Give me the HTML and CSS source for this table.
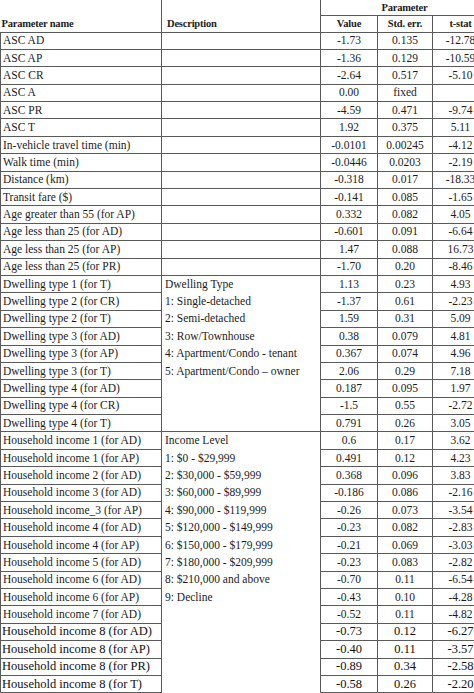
FILE: index.html
```html
<!DOCTYPE html>
<html>
<head>
<meta charset="utf-8">
<link rel="stylesheet" href="styles.css">
</head>
<body>
<table class="tbl">
<colgroup>
<col class="c-name"><col class="c-desc"><col class="c-val"><col class="c-std"><col class="c-t">
</colgroup>
<thead>
<tr class="h1">
<th class="name" rowspan="2">Parameter name</th>
<th class="desc" rowspan="2">Description</th>
<th class="param" colspan="3">Parameter</th>
</tr>
<tr class="h2">
<th class="num">Value</th><th class="num">Std. err.</th><th class="num">t-stat</th>
</tr>
</thead>
<tbody>
<tr><td class="name">ASC AD</td><td class="desc"></td><td class="num">-1.73</td><td class="num">0.135</td><td class="num">-12.78</td></tr>
<tr><td class="name">ASC AP</td><td class="desc"></td><td class="num">-1.36</td><td class="num">0.129</td><td class="num">-10.59</td></tr>
<tr><td class="name">ASC CR</td><td class="desc"></td><td class="num">-2.64</td><td class="num">0.517</td><td class="num">-5.10</td></tr>
<tr><td class="name">ASC A</td><td class="desc"></td><td class="num">0.00</td><td class="num">fixed</td><td class="num"></td></tr>
<tr><td class="name">ASC PR</td><td class="desc"></td><td class="num">-4.59</td><td class="num">0.471</td><td class="num">-9.74</td></tr>
<tr><td class="name">ASC T</td><td class="desc"></td><td class="num">1.92</td><td class="num">0.375</td><td class="num">5.11</td></tr>
<tr><td class="name">In-vehicle travel time (min)</td><td class="desc"></td><td class="num">-0.0101</td><td class="num">0.00245</td><td class="num">-4.12</td></tr>
<tr><td class="name">Walk time (min)</td><td class="desc"></td><td class="num">-0.0446</td><td class="num">0.0203</td><td class="num">-2.19</td></tr>
<tr><td class="name">Distance (km)</td><td class="desc"></td><td class="num">-0.318</td><td class="num">0.017</td><td class="num">-18.33</td></tr>
<tr><td class="name">Transit fare ($)</td><td class="desc"></td><td class="num">-0.141</td><td class="num">0.085</td><td class="num">-1.65</td></tr>
<tr><td class="name">Age greater than 55 (for AP)</td><td class="desc"></td><td class="num">0.332</td><td class="num">0.082</td><td class="num">4.05</td></tr>
<tr><td class="name">Age less than 25 (for AD)</td><td class="desc"></td><td class="num">-0.601</td><td class="num">0.091</td><td class="num">-6.64</td></tr>
<tr><td class="name">Age less than 25 (for AP)</td><td class="desc"></td><td class="num">1.47</td><td class="num">0.088</td><td class="num">16.73</td></tr>
<tr><td class="name">Age less than 25 (for PR)</td><td class="desc"></td><td class="num">-1.70</td><td class="num">0.20</td><td class="num">-8.46</td></tr>
<tr><td class="name">Dwelling type 1 (for T)</td><td class="desc grp first">Dwelling Type</td><td class="num">1.13</td><td class="num">0.23</td><td class="num">4.93</td></tr>
<tr><td class="name">Dwelling type 2 (for CR)</td><td class="desc grp">1: Single-detached</td><td class="num">-1.37</td><td class="num">0.61</td><td class="num">-2.23</td></tr>
<tr><td class="name">Dwelling type 2 (for T)</td><td class="desc grp">2: Semi-detached</td><td class="num">1.59</td><td class="num">0.31</td><td class="num">5.09</td></tr>
<tr><td class="name">Dwelling type 3 (for AD)</td><td class="desc grp">3: Row/Townhouse</td><td class="num">0.38</td><td class="num">0.079</td><td class="num">4.81</td></tr>
<tr><td class="name">Dwelling type 3 (for AP)</td><td class="desc grp">4: Apartment/Condo - tenant</td><td class="num">0.367</td><td class="num">0.074</td><td class="num">4.96</td></tr>
<tr><td class="name">Dwelling type 3 (for T)</td><td class="desc grp">5: Apartment/Condo – owner</td><td class="num">2.06</td><td class="num">0.29</td><td class="num">7.18</td></tr>
<tr><td class="name">Dwelling type 4 (for AD)</td><td class="desc grp"></td><td class="num">0.187</td><td class="num">0.095</td><td class="num">1.97</td></tr>
<tr><td class="name">Dwelling type 4 (for CR)</td><td class="desc grp"></td><td class="num">-1.5</td><td class="num">0.55</td><td class="num">-2.72</td></tr>
<tr><td class="name">Dwelling type 4 (for T)</td><td class="desc grp last"></td><td class="num">0.791</td><td class="num">0.26</td><td class="num">3.05</td></tr>
<tr><td class="name">Household income 1 (for AD)</td><td class="desc grp first">Income Level</td><td class="num">0.6</td><td class="num">0.17</td><td class="num">3.62</td></tr>
<tr><td class="name">Household income 1 (for AP)</td><td class="desc grp">1: $0 - $29,999</td><td class="num">0.491</td><td class="num">0.12</td><td class="num">4.23</td></tr>
<tr><td class="name">Household income 2 (for AD)</td><td class="desc grp">2: $30,000 - $59,999</td><td class="num">0.368</td><td class="num">0.096</td><td class="num">3.83</td></tr>
<tr><td class="name">Household income 3 (for AD)</td><td class="desc grp">3: $60,000 - $89,999</td><td class="num">-0.186</td><td class="num">0.086</td><td class="num">-2.16</td></tr>
<tr><td class="name">Household income_3 (for AP)</td><td class="desc grp">4: $90,000 - $119,999</td><td class="num">-0.26</td><td class="num">0.073</td><td class="num">-3.54</td></tr>
<tr><td class="name">Household income 4 (for AD)</td><td class="desc grp">5: $120,000 - $149,999</td><td class="num">-0.23</td><td class="num">0.082</td><td class="num">-2.83</td></tr>
<tr><td class="name">Household income 4 (for AP)</td><td class="desc grp">6: $150,000 - $179,999</td><td class="num">-0.21</td><td class="num">0.069</td><td class="num">-3.03</td></tr>
<tr><td class="name">Household income 5 (for AD)</td><td class="desc grp">7: $180,000 - $209,999</td><td class="num">-0.23</td><td class="num">0.083</td><td class="num">-2.82</td></tr>
<tr><td class="name">Household income 6 (for AD)</td><td class="desc grp">8: $210,000 and above</td><td class="num">-0.70</td><td class="num">0.11</td><td class="num">-6.54</td></tr>
<tr><td class="name">Household income 6 (for AP)</td><td class="desc grp">9: Decline</td><td class="num">-0.43</td><td class="num">0.10</td><td class="num">-4.28</td></tr>
<tr><td class="name">Household income 7 (for AD)</td><td class="desc grp"></td><td class="num">-0.52</td><td class="num">0.11</td><td class="num">-4.82</td></tr>
<tr class="big"><td class="name">Household income 8 (for AD)</td><td class="desc grp"></td><td class="num">-0.73</td><td class="num">0.12</td><td class="num">-6.27</td></tr>
<tr class="big"><td class="name">Household income 8 (for AP)</td><td class="desc grp"></td><td class="num">-0.40</td><td class="num">0.11</td><td class="num">-3.57</td></tr>
<tr class="big"><td class="name">Household income 8 (for PR)</td><td class="desc grp"></td><td class="num">-0.89</td><td class="num">0.34</td><td class="num">-2.58</td></tr>
<tr class="big"><td class="name">Household income 8 (for T)</td><td class="desc grp"></td><td class="num">-0.58</td><td class="num">0.26</td><td class="num">-2.20</td></tr>
</tbody>
</table>
</body>
</html>
```
FILE: styles.css
```css
html, body {
  margin: 0;
  padding: 0;
  background: #ffffff;
  overflow: hidden;
}
body {
  width: 474px;
  height: 693px;
}
.tbl {
  border-collapse: collapse;
  table-layout: fixed;
  width: 488px;
  font-family: "Liberation Serif", "Times New Roman", serif;
  font-size: 11.5px;
  color: #1c1c1c;
}
.c-name { width: 161px; }
.c-desc { width: 159px; }
.c-val { width: 57px; }
.c-std { width: 55px; }
.c-t { width: 56px; }

.tbl th, .tbl td {
  border: 1px solid #5a5a5a;
  padding: 0;
  white-space: nowrap;
  overflow: hidden;
  line-height: 13px;
}
.tbl thead th {
  font-weight: bold;
  font-size: 10.5px;
  letter-spacing: -0.2px;
  border-top: none;
}
.tbl .h1 { height: 15px; }
.tbl .h2 { height: 17px; }
.tbl th.name {
  text-align: left;
  vertical-align: bottom;
  padding: 0 0 2px 1px;
  border-left: none;
}
.tbl th.desc {
  text-align: left;
  vertical-align: bottom;
  padding: 0 0 2px 5px;
}
.tbl th.param {
  text-align: center;
  vertical-align: middle;
}
.tbl tbody tr { height: 17.4px; }
.tbl td.name {
  text-align: left;
  padding-left: 2px;
}
.tbl td.desc {
  text-align: left;
  padding-left: 3px;
}
.tbl .num { text-align: center; }

.tbl td.grp {
  border-top: none;
  border-bottom: none;
}
.tbl td.grp.first { border-top: 1px solid #5a5a5a; }
.tbl td.grp.last { border-bottom: 1px solid #5a5a5a; }

.tbl tr.big td.name,
.tbl tr.big td.num {
  font-size: 12.5px;
  color: #111;
}
.tbl tr.big td.name { padding-left: 1px; }
```
